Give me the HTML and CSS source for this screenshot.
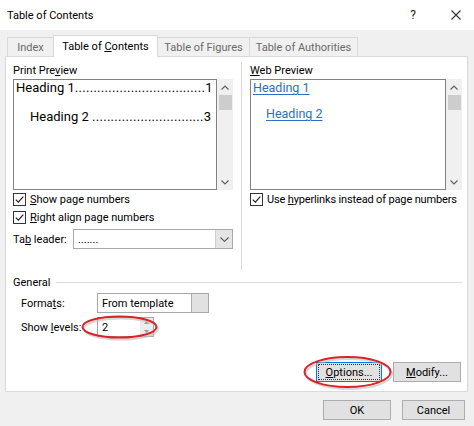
FILE: index.html
```html
<!DOCTYPE html>
<html>
<head>
<meta charset="utf-8">
<link rel="stylesheet" href="styles.css">
</head>
<body>
<div class="dialog">
  <div class="titlebar">
    <span class="title">Table of Contents</span>
    <span class="help">?</span>
    <svg class="close" width="10" height="10" viewBox="0 0 10 10"><path d="M0.5 0.5L9.5 9.5M9.5 0.5L0.5 9.5" stroke="#333" stroke-width="1.1" fill="none"/></svg>
  </div>
  <div class="tabs">
    <div class="tab t-index"><span>Index</span></div>
    <div class="tab t-toc active"><span>Table of <u>C</u>ontents</span></div>
    <div class="tab t-tof"><span>Table of Figures</span></div>
    <div class="tab t-toa"><span>Table of Authorities</span></div>
  </div>
  <div class="panel">
    <div class="columns">
      <div class="col-left">
        <div class="label">Print Pre<u>v</u>iew</div>
        <div class="preview">
          <div class="pbox">
            <div class="toc-row h1"><span>Heading 1</span><span class="dots">...................................</span><span>1</span></div>
            <div class="toc-row h2"><span>Heading 2&nbsp;</span><span class="dots">..............................</span><span>3</span></div>
          </div>
          <div class="scroll">
            <div class="arrow"><svg width="8" height="5" viewBox="0 0 8 5"><path d="M0.5 4.5L4 1L7.5 4.5" stroke="#606060" stroke-width="1.2" fill="none"/></svg></div>
            <div class="thumb"></div>
            <div class="track"></div>
            <div class="arrow"><svg width="8" height="5" viewBox="0 0 8 5"><path d="M0.5 0.5L4 4L7.5 0.5" stroke="#606060" stroke-width="1.2" fill="none"/></svg></div>
          </div>
        </div>
        <div class="check-row"><span class="cb"><svg width="11" height="11" viewBox="0 0 11 11"><path d="M1.8 5.6L4.3 8.1L9.3 2.6" stroke="#222" stroke-width="1.2" fill="none"/></svg></span><span><u>S</u>how page numbers</span></div>
        <div class="check-row"><span class="cb"><svg width="11" height="11" viewBox="0 0 11 11"><path d="M1.8 5.6L4.3 8.1L9.3 2.6" stroke="#222" stroke-width="1.2" fill="none"/></svg></span><span><u>R</u>ight align page numbers</span></div>
        <div class="leader-row">
          <span class="leader-label">Ta<u>b</u> leader:</span>
          <div class="combo leader-combo">
            <span class="combo-text">.......</span>
            <span class="drop"><svg width="9" height="5" viewBox="0 0 9 5"><path d="M0.5 0.5L4.5 4.3L8.5 0.5" stroke="#555" stroke-width="1.1" fill="none"/></svg></span>
          </div>
        </div>
      </div>
      <div class="vdiv"></div>
      <div class="col-right">
        <div class="label"><u>W</u>eb Preview</div>
        <div class="preview">
          <div class="pbox">
            <div class="web-row w1"><a>Heading 1</a></div>
            <div class="web-row w2"><a>Heading 2</a></div>
          </div>
          <div class="scroll">
            <div class="arrow"><svg width="8" height="5" viewBox="0 0 8 5"><path d="M0.5 4.5L4 1L7.5 4.5" stroke="#606060" stroke-width="1.2" fill="none"/></svg></div>
            <div class="thumb"></div>
            <div class="track"></div>
            <div class="arrow"><svg width="8" height="5" viewBox="0 0 8 5"><path d="M0.5 0.5L4 4L7.5 0.5" stroke="#606060" stroke-width="1.2" fill="none"/></svg></div>
          </div>
        </div>
        <div class="check-row"><span class="cb"><svg width="11" height="11" viewBox="0 0 11 11"><path d="M1.8 5.6L4.3 8.1L9.3 2.6" stroke="#222" stroke-width="1.2" fill="none"/></svg></span><span class="tight">Use <u>h</u>yperlinks instead of page numbers</span></div>
      </div>
    </div>
    <div class="general">
      <span>General</span><span class="gline"></span>
    </div>
    <div class="field-row formats-row">
      <span class="field-label">Forma<u>t</u>s:</span>
      <div class="combo formats-combo">
        <span class="combo-text">From template</span>
        <span class="drop plain"></span>
      </div>
    </div>
    <div class="field-row levels-row">
      <span class="field-label">Show <u>l</u>evels:</span>
      <div class="combo spin">
        <span class="combo-text">2</span>
        <span class="spin-btns">
          <span class="sb"><svg width="5" height="3" viewBox="0 0 5 3"><path d="M0 3L2.5 0L5 3Z" fill="#999"/></svg></span>
          <span class="sb"><svg width="5" height="3" viewBox="0 0 5 3"><path d="M0 0L2.5 3L5 0Z" fill="#999"/></svg></span>
        </span>
      </div>
    </div>
    <div class="btn-row">
      <button class="btn focus"><span class="focus-inner"><span><u>O</u>ptions...</span></span></button>
      <button class="btn modify"><span><u>M</u>odify...</span></button>
    </div>
  </div>
  <div class="footer">
    <button class="btn ok">OK</button>
    <button class="btn cancel">Cancel</button>
  </div>
  <svg class="marks" width="474" height="426" viewBox="0 0 474 426">
    <ellipse cx="121" cy="329" rx="37" ry="10.5" fill="none" stroke="#bbb" stroke-width="2" opacity="0.6"/>
    <ellipse cx="119.5" cy="327" rx="37" ry="10.5" fill="none" stroke="#d8232a" stroke-width="2"/>
    <ellipse cx="349" cy="374" rx="43" ry="15" fill="none" stroke="#bbb" stroke-width="2" opacity="0.6"/>
    <ellipse cx="347.5" cy="372" rx="43" ry="15" fill="none" stroke="#d8232a" stroke-width="2"/>
  </svg>
</div>
</body>
</html>
```
FILE: styles.css
```css
* { box-sizing: border-box; }
body {
  margin: 0;
  width: 474px;
  height: 426px;
  overflow: hidden;
  font-family: Roboto, "Noto Sans", sans-serif;
  font-size: 11px;
  color: #000;
  background: #f0f0f0;
}
u { text-decoration: underline; text-underline-offset: 1px; }
.dialog {
  position: relative;
  width: 474px;
  height: 426px;
  display: flex;
  flex-direction: column;
}
.titlebar {
  height: 30px;
  background: #fff;
  display: flex;
  align-items: center;
  padding-left: 7px;
}
.title { flex: 1; font-size: 11px; color: #000; }
.help { font-size: 12px; color: #222; margin-right: 35px; }
.close { margin-right: 13px; }

.tabs {
  height: 26px;
  display: flex;
  align-items: flex-end;
  padding-left: 7px;
}
.tab {
  height: 19px;
  border: 1px solid #d9d9d9;
  border-bottom: none;
  margin-right: -1px;
  display: flex;
  align-items: center;
  justify-content: center;
  color: #6a6a6a;
  background: #f0f0f0;
  white-space: nowrap;
}
.tab.active {
  height: 22px;
  background: #fff;
  color: #000;
  margin-bottom: -1px;
  position: relative;
  z-index: 1;
}
.t-index { width: 47px; }
.t-toc { width: 105px; }
.t-tof { width: 93px; }
.t-toa { width: 109px; }

.panel {
  margin-left: 5px;
  width: 463px;
  height: 336px;
  background: #fff;
  border: 1px solid #d9d9d9;
  padding: 5px 5px 0 7px;
  display: flex;
  flex-direction: column;
}
.columns { display: flex; height: 208px; }
.col-left { width: 220px; }
.vdiv { width: 1px; background: #dadada; margin-left: 8px; }
.col-right { width: 212px; margin-left: 8px; }
.label { height: 17px; line-height: 17px; }
.preview { display: flex; height: 111px; }
.pbox {
  flex: 1;
  border: 1px solid #828282;
  background: #fff;
  min-width: 0;
}
.scroll {
  width: 16px;
  background: #f0f0f0;
  display: flex;
  flex-direction: column;
  align-items: center;
}
.arrow { height: 16px; width: 16px; display: flex; align-items: center; justify-content: center; }
.thumb { width: 13px; height: 15px; background: #cdcdcd; }
.track { flex: 1; }

.toc-row {
  display: flex;
  font-size: 13px;
  height: 16px;
  line-height: 16px;
  padding-right: 8px;
  white-space: nowrap;
}
.toc-row .dots { flex: 1; text-align: right; letter-spacing: 0.3px; }
.h1 { padding-left: 2px; }
.h2 { padding-left: 16px; margin-top: 13px; }

.web-row { font-size: 12.5px; height: 16px; line-height: 16px; }
.web-row a { color: #2e6fbd; text-decoration: underline; text-underline-offset: 2px; }
.w1 { padding-left: 2px; }
.w2 { padding-left: 15px; margin-top: 10px; }

.check-row {
  height: 18px;
  display: flex;
  align-items: center;
  gap: 4px;
  white-space: nowrap;
}
.tight { letter-spacing: -0.15px; }
.cb {
  flex: none;
  width: 13px;
  height: 13px;
  border: 1px solid #333;
  background: #fff;
  display: flex;
  align-items: center;
  justify-content: center;
}
.leader-row {
  margin-top: 3px;
  height: 20px;
  display: flex;
  align-items: center;
}
.leader-label { width: 60px; }
.combo {
  height: 20px;
  border: 1px solid #a8a8a8;
  background: #fff;
  display: flex;
  align-items: center;
}
.leader-combo { flex: 1; }
.combo-text { flex: 1; padding-left: 4px; }
.drop {
  width: 17px;
  height: 18px;
  background: #e5e5e5;
  border-left: 1px solid #d0d0d0;
  display: flex;
  align-items: center;
  justify-content: center;
}
.drop.plain { background: #e1e1e1; border-left: 1px solid #adadad; }

.general {
  margin-top: 4px;
  height: 16px;
  display: flex;
  align-items: center;
  gap: 6px;
}
.gline { flex: 1; height: 1px; background: #dcdcdc; }
.field-row {
  display: flex;
  align-items: center;
  padding-left: 8px;
  height: 20px;
}
.formats-row { margin-top: 3px; }
.levels-row { margin-top: 4px; }
.field-label { width: 76px; }
.formats-combo { width: 112px; }
.spin { width: 57px; }
.spin-btns {
  width: 13px;
  height: 18px;
  display: flex;
  flex-direction: column;
  background: #ececec;
}
.sb { flex: 1; display: flex; align-items: center; justify-content: center; }

.btn-row {
  margin-top: 25px;
  display: flex;
  justify-content: flex-end;
  gap: 11px;
  padding-right: 1px;
}
.btn {
  height: 20px;
  margin: 0;
  padding: 0;
  font-family: Roboto, "Noto Sans", sans-serif;
  font-size: 11px;
  color: #000;
  background: #e1e1e1;
  border: 1px solid #adadad;
  display: flex;
  align-items: center;
  justify-content: center;
}
.btn.focus { width: 66px; border: 1px solid #0078d7; padding: 1px; }
.focus-inner {
  width: 100%;
  height: 100%;
  border: 1px dotted #333;
  display: flex;
  align-items: center;
  justify-content: center;
}
.btn.modify { width: 68px; }

.footer {
  flex: 1;
  display: flex;
  justify-content: flex-end;
  align-items: flex-start;
  padding-top: 8px;
  padding-right: 9px;
  gap: 11px;
}
.btn.ok { width: 68px; }
.btn.cancel { width: 63px; }

.marks { position: absolute; left: 0; top: 0; pointer-events: none; }
```
